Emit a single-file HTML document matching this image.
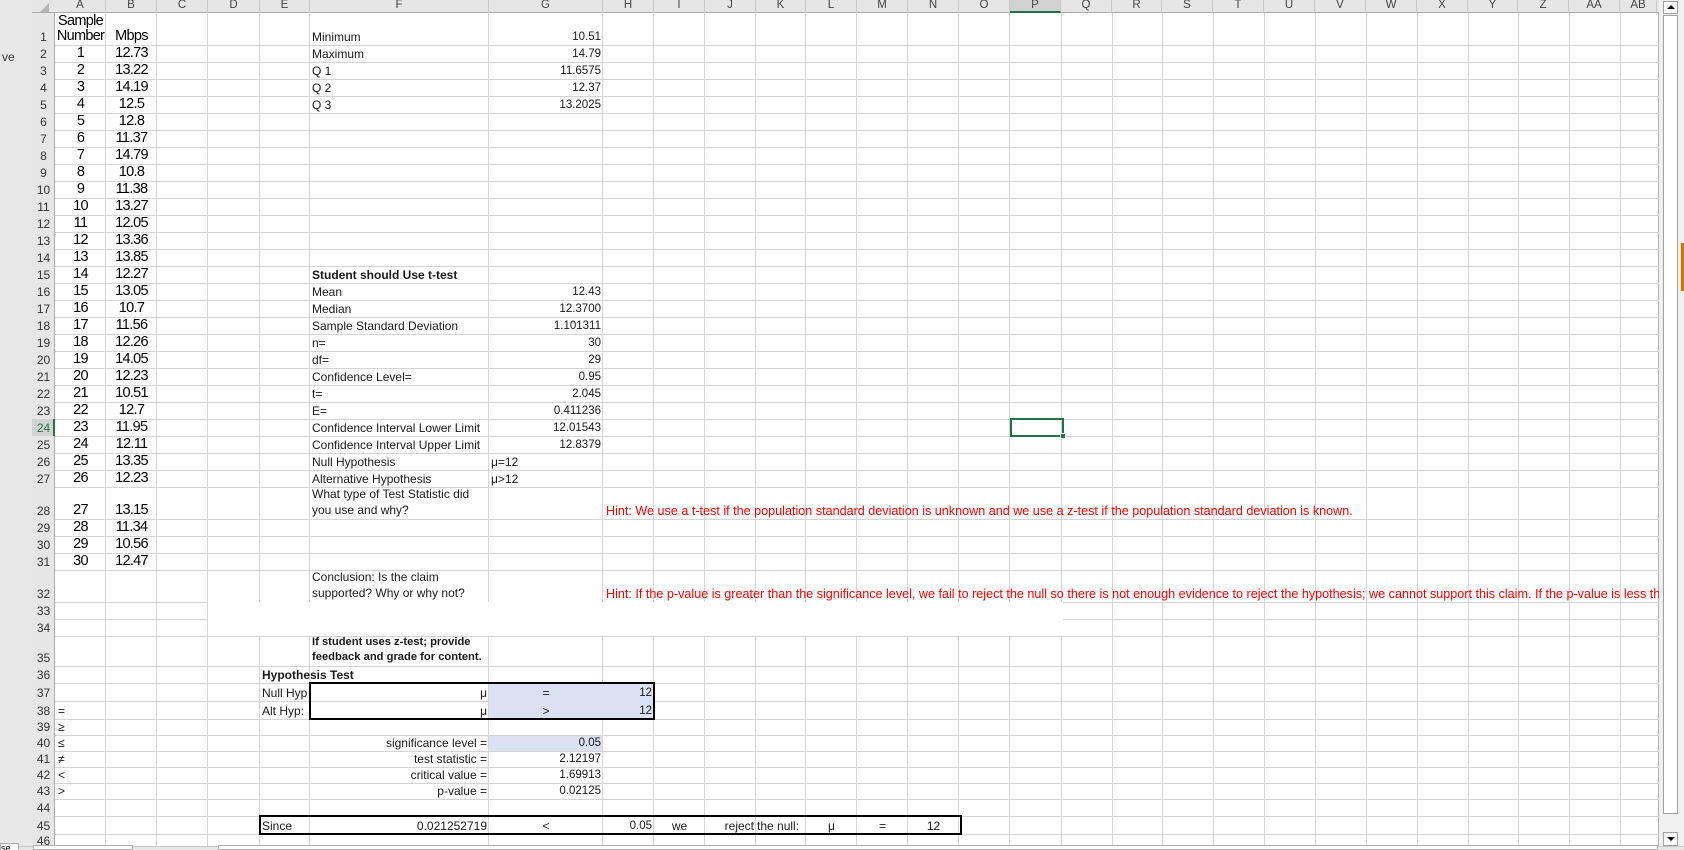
<!DOCTYPE html>
<html><head><meta charset="utf-8"><style>
*{margin:0;padding:0;box-sizing:border-box}
body{width:1684px;height:850px;overflow:hidden;background:#fff;position:relative;font-family:"Liberation Sans",Arial,sans-serif;color:#000}
.lp{position:absolute;left:0;top:0;width:32px;height:850px;background:#e8e8e8}
.ch{position:absolute;left:32px;top:0;width:1627px;height:13px;background:#e6e6e6;border-bottom:1px solid #ababab}
.ch i{position:absolute;top:0;height:13px;font-style:normal;font-size:11.5px;line-height:11px;color:#444;text-align:center;border-right:1px solid #c8c8c8}
.rh{position:absolute;left:32px;top:13px;width:23px;height:833px;background:#e6e6e6;border-right:1px solid #ababab}
.vl{position:absolute;top:13px;width:1px;height:833px;background:#d4d4d4}
.hl{position:absolute;left:55px;width:1604px;height:1px;background:#d4d4d4}
.row{position:absolute;left:0;width:1659px}
.row>i{position:absolute;top:0;height:100%;font-style:normal;display:flex;align-items:flex-end;white-space:nowrap;padding-bottom:1px;font-size:12px;line-height:14px;color:#1a1a1a}
.row>i.n{left:32px;width:23px;justify-content:center;font-size:12px;color:#333}
.row>i.a{left:55px;width:51px;justify-content:center;font-size:14.5px;letter-spacing:-.7px;color:#000;line-height:16px}
.row>i.b{left:106px;width:51px;justify-content:center;font-size:14.5px;letter-spacing:-.7px;color:#000;line-height:16px}
.row>i.f{left:312px;width:177px}
.row>i.fr{left:310px;width:177px;justify-content:flex-end}
.row>i.g{left:489px;width:112px;justify-content:flex-end;font-size:11.5px}
.row>i.gl{left:491px;width:112px}
.row>i.gc{left:489px;width:114px;justify-content:center}
.row>i.h{left:606px;width:60px;color:#f00;font-size:12.6px}
.row>i.hr2{left:603px;width:49px;justify-content:flex-end;font-size:11.5px}
.row>i.e{left:262px;width:60px}
.row>i.al{left:58px;width:40px}
.bold{font-weight:bold}
.wrap{white-space:normal!important;line-height:16px!important}
.shade{position:absolute;background:#d9e1f2}
.box{position:absolute;border:2px solid #000}
</style></head><body>
<div class="lp"></div>
<div style="position:absolute;left:2px;top:50px;font-size:12px;color:#333">ve</div>
<div class="ch">
<div style="position:absolute;left:8px;top:3px;width:0;height:0;border-left:9px solid transparent;border-bottom:9px solid #b5b5b5"></div>
<i style="left:23px;width:51px">A</i><i style="left:74px;width:51px">B</i><i style="left:125px;width:51px">C</i><i style="left:176px;width:52px">D</i><i style="left:228px;width:50px">E</i><i style="left:278px;width:179px">F</i><i style="left:457px;width:114px">G</i>
<i style="left:571px;width:51px">H</i><i style="left:622px;width:51px">I</i><i style="left:673px;width:51px">J</i><i style="left:724px;width:50px">K</i><i style="left:774px;width:51px">L</i><i style="left:825px;width:51px">M</i><i style="left:876px;width:51px">N</i><i style="left:927px;width:51px">O</i><i style="left:978px;width:51px;background:#d2d2d2;border-bottom:2px solid #217346">P</i><i style="left:1029px;width:51px">Q</i><i style="left:1080px;width:50px">R</i><i style="left:1130px;width:51px">S</i><i style="left:1181px;width:51px">T</i><i style="left:1232px;width:51px">U</i><i style="left:1283px;width:51px">V</i><i style="left:1334px;width:51px">W</i><i style="left:1385px;width:51px">X</i><i style="left:1436px;width:50px">Y</i><i style="left:1486px;width:51px">Z</i><i style="left:1537px;width:51px">AA</i><i style="left:1588px;width:37px">AB</i>
</div>
<div class="rh"></div>
<div style="position:absolute;left:32px;top:419px;width:23px;height:17px;background:#d2d2d2;border-right:2px solid #217346"></div>
<div class="vl" style="left:105px"></div><div class="vl" style="left:156px"></div><div class="vl" style="left:207px"></div><div class="vl" style="left:259px"></div><div class="vl" style="left:309px"></div><div class="vl" style="left:488px"></div><div class="vl" style="left:602px"></div>
<div class="vl" style="left:653px"></div><div class="vl" style="left:704px"></div><div class="vl" style="left:755px"></div><div class="vl" style="left:805px"></div><div class="vl" style="left:856px"></div><div class="vl" style="left:907px"></div><div class="vl" style="left:958px"></div><div class="vl" style="left:1009px"></div><div class="vl" style="left:1061px"></div><div class="vl" style="left:1112px"></div><div class="vl" style="left:1162px"></div><div class="vl" style="left:1213px"></div><div class="vl" style="left:1264px"></div><div class="vl" style="left:1315px"></div><div class="vl" style="left:1366px"></div><div class="vl" style="left:1417px"></div><div class="vl" style="left:1468px"></div><div class="vl" style="left:1518px"></div><div class="vl" style="left:1569px"></div><div class="vl" style="left:1620px"></div>
<div class="vl" style="left:1658px;background:#b0b0b0"></div>
<div class="hl" style="top:45px"></div><div class="hl" style="top:62px"></div><div class="hl" style="top:79px"></div><div class="hl" style="top:96px"></div><div class="hl" style="top:113px"></div><div class="hl" style="top:130px"></div><div class="hl" style="top:147px"></div><div class="hl" style="top:164px"></div><div class="hl" style="top:181px"></div><div class="hl" style="top:198px"></div><div class="hl" style="top:215px"></div><div class="hl" style="top:232px"></div><div class="hl" style="top:249px"></div><div class="hl" style="top:266px"></div><div class="hl" style="top:283px"></div><div class="hl" style="top:300px"></div><div class="hl" style="top:317px"></div><div class="hl" style="top:334px"></div><div class="hl" style="top:351px"></div><div class="hl" style="top:368px"></div><div class="hl" style="top:385px"></div><div class="hl" style="top:402px"></div><div class="hl" style="top:419px"></div><div class="hl" style="top:436px"></div><div class="hl" style="top:453px"></div><div class="hl" style="top:470px"></div><div class="hl" style="top:487px"></div><div class="hl" style="top:519px"></div><div class="hl" style="top:536px"></div><div class="hl" style="top:553px"></div><div class="hl" style="top:570px"></div><div class="hl" style="top:602px"></div><div class="hl" style="top:619px"></div><div class="hl" style="top:636px"></div><div class="hl" style="top:666px"></div><div class="hl" style="top:683px"></div><div class="hl" style="top:701px"></div><div class="hl" style="top:719px"></div><div class="hl" style="top:735px"></div><div class="hl" style="top:751px"></div><div class="hl" style="top:767px"></div><div class="hl" style="top:783px"></div><div class="hl" style="top:799px"></div><div class="hl" style="top:816px"></div><div class="hl" style="top:834px"></div>
<div style="position:absolute;left:208px;top:602px;width:855px;height:34px;background:#fff"></div>
<div class="shade" style="left:489px;top:684px;width:165px;height:35px"></div>
<div class="shade" style="left:489px;top:736px;width:113px;height:15px"></div>
<div style="position:absolute;left:1010px;top:418px;width:54px;height:19px;border:2px solid #217346"></div>
<div style="position:absolute;left:1060px;top:433px;width:6px;height:6px;background:#217346;border:1px solid #fff"></div>

<div class="row" style="top:13px;height:32px"><i class="n">1</i><i class="a wrap" style="text-align:center;line-height:15px!important">Sample Number</i><i class="b">Mbps</i><i class="f">Minimum</i><i class="g">10.51</i></div>
<div class="row" style="top:45px;height:17px"><i class="n">2</i><i class="a">1</i><i class="b">12.73</i><i class="f">Maximum</i><i class="g">14.79</i></div>
<div class="row" style="top:62px;height:17px"><i class="n">3</i><i class="a">2</i><i class="b">13.22</i><i class="f">Q 1</i><i class="g">11.6575</i></div>
<div class="row" style="top:79px;height:17px"><i class="n">4</i><i class="a">3</i><i class="b">14.19</i><i class="f">Q 2</i><i class="g">12.37</i></div>
<div class="row" style="top:96px;height:17px"><i class="n">5</i><i class="a">4</i><i class="b">12.5</i><i class="f">Q 3</i><i class="g">13.2025</i></div>
<div class="row" style="top:113px;height:17px"><i class="n">6</i><i class="a">5</i><i class="b">12.8</i></div>
<div class="row" style="top:130px;height:17px"><i class="n">7</i><i class="a">6</i><i class="b">11.37</i></div>
<div class="row" style="top:147px;height:17px"><i class="n">8</i><i class="a">7</i><i class="b">14.79</i></div>
<div class="row" style="top:164px;height:17px"><i class="n">9</i><i class="a">8</i><i class="b">10.8</i></div>
<div class="row" style="top:181px;height:17px"><i class="n">10</i><i class="a">9</i><i class="b">11.38</i></div>
<div class="row" style="top:198px;height:17px"><i class="n">11</i><i class="a">10</i><i class="b">13.27</i></div>
<div class="row" style="top:215px;height:17px"><i class="n">12</i><i class="a">11</i><i class="b">12.05</i></div>
<div class="row" style="top:232px;height:17px"><i class="n">13</i><i class="a">12</i><i class="b">13.36</i></div>
<div class="row" style="top:249px;height:17px"><i class="n">14</i><i class="a">13</i><i class="b">13.85</i></div>
<div class="row" style="top:266px;height:17px"><i class="n">15</i><i class="a">14</i><i class="b">12.27</i><i class="f bold">Student should Use t-test</i></div>
<div class="row" style="top:283px;height:17px"><i class="n">16</i><i class="a">15</i><i class="b">13.05</i><i class="f">Mean</i><i class="g">12.43</i></div>
<div class="row" style="top:300px;height:17px"><i class="n">17</i><i class="a">16</i><i class="b">10.7</i><i class="f">Median</i><i class="g">12.3700</i></div>
<div class="row" style="top:317px;height:17px"><i class="n">18</i><i class="a">17</i><i class="b">11.56</i><i class="f">Sample Standard Deviation</i><i class="g">1.101311</i></div>
<div class="row" style="top:334px;height:17px"><i class="n">19</i><i class="a">18</i><i class="b">12.26</i><i class="f">n=</i><i class="g">30</i></div>
<div class="row" style="top:351px;height:17px"><i class="n">20</i><i class="a">19</i><i class="b">14.05</i><i class="f">df=</i><i class="g">29</i></div>
<div class="row" style="top:368px;height:17px"><i class="n">21</i><i class="a">20</i><i class="b">12.23</i><i class="f">Confidence Level=</i><i class="g">0.95</i></div>
<div class="row" style="top:385px;height:17px"><i class="n">22</i><i class="a">21</i><i class="b">10.51</i><i class="f">t=</i><i class="g">2.045</i></div>
<div class="row" style="top:402px;height:17px"><i class="n">23</i><i class="a">22</i><i class="b">12.7</i><i class="f">E=</i><i class="g">0.411236</i></div>
<div class="row" style="top:419px;height:17px"><i class="n" style="color:#217346">24</i><i class="a">23</i><i class="b">11.95</i><i class="f">Confidence Interval Lower Limit</i><i class="g">12.01543</i></div>
<div class="row" style="top:436px;height:17px"><i class="n">25</i><i class="a">24</i><i class="b">12.11</i><i class="f">Confidence Interval Upper Limit</i><i class="g">12.8379</i></div>
<div class="row" style="top:453px;height:17px"><i class="n">26</i><i class="a">25</i><i class="b">13.35</i><i class="f">Null Hypothesis</i><i class="gl">μ=12</i></div>
<div class="row" style="top:470px;height:17px"><i class="n">27</i><i class="a">26</i><i class="b">12.23</i><i class="f">Alternative Hypothesis</i><i class="gl">μ&gt;12</i></div>
<div class="row" style="top:487px;height:32px"><i class="n">28</i><i class="a">27</i><i class="b">13.15</i><i class="f wrap">What type of Test Statistic did you use and why?</i><i class="h">Hint: We use a t-test if the population standard deviation is unknown and we use a z-test if the population standard deviation is known.</i></div>
<div class="row" style="top:519px;height:17px"><i class="n">29</i><i class="a">28</i><i class="b">11.34</i></div>
<div class="row" style="top:536px;height:17px"><i class="n">30</i><i class="a">29</i><i class="b">10.56</i></div>
<div class="row" style="top:553px;height:17px"><i class="n">31</i><i class="a">30</i><i class="b">12.47</i></div>
<div class="row" style="top:570px;height:32px;overflow:hidden"><i class="n">32</i><i class="f wrap">Conclusion: Is the claim supported? Why or why not?</i><i class="h">Hint: If the p-value is greater than the significance level, we fail to reject the null so there is not enough evidence to reject the hypothesis; we cannot support this claim. If the p-value is less than</i></div>
<div class="row" style="top:602px;height:17px"><i class="n">33</i></div>
<div class="row" style="top:619px;height:17px"><i class="n">34</i></div>
<div class="row" style="top:636px;height:30px"><i class="n">35</i><i class="f wrap bold" style="font-size:11.2px;width:180px;line-height:15px!important">If student uses z-test; provide feedback and grade for content.</i></div>
<div class="row" style="top:666px;height:17px"><i class="n">36</i><i class="e bold" style="width:120px">Hypothesis Test</i></div>
<div class="row" style="top:683px;height:18px"><i class="n">37</i><i class="e">Null Hyp</i><i class="fr">μ</i><i class="gc">=</i><i class="hr2">12</i></div>
<div class="row" style="top:701px;height:18px"><i class="n">38</i><i class="al">=</i><i class="e">Alt Hyp:</i><i class="fr">μ</i><i class="gc">&gt;</i><i class="hr2">12</i></div>
<div class="row" style="top:719px;height:16px"><i class="n">39</i><i class="al">≥</i></div>
<div class="row" style="top:735px;height:16px"><i class="n">40</i><i class="al">≤</i><i class="fr">significance level =</i><i class="g">0.05</i></div>
<div class="row" style="top:751px;height:16px"><i class="n">41</i><i class="al">≠</i><i class="fr">test statistic =</i><i class="g">2.12197</i></div>
<div class="row" style="top:767px;height:16px"><i class="n">42</i><i class="al">&lt;</i><i class="fr">critical value =</i><i class="g">1.69913</i></div>
<div class="row" style="top:783px;height:16px"><i class="n">43</i><i class="al">&gt;</i><i class="fr">p-value =</i><i class="g">0.02125</i></div>
<div class="row" style="top:799px;height:17px"><i class="n">44</i></div>
<div class="row" style="top:816px;height:18px"><i class="n">45</i><i class="e">Since</i><i class="fr">0.021252719</i><i class="gc">&lt;</i><i class="hr2">0.05</i><i style="left:654px;width:51px;justify-content:center">we</i><i style="left:705px;width:49px;justify-content:flex-end">reject</i><i style="left:757px;width:50px">the null:</i><i style="left:806px;width:51px;justify-content:center">μ</i><i style="left:857px;width:51px;justify-content:center">=</i><i style="left:908px;width:51px;justify-content:center">12</i></div>
<div class="row" style="top:834px;height:12px;overflow:hidden"><i class="n" style="align-items:flex-start">46</i></div>

<div class="box" style="left:309px;top:682px;width:346px;height:38px"></div>
<div class="box" style="left:259px;top:815px;width:703px;height:20px"></div>

<div style="position:absolute;left:1659px;top:0;width:25px;height:846px;background:#f0f0f0"></div>
<div style="position:absolute;left:1663px;top:1px;width:15px;height:13px;background:#fff;border:1px solid #a0a0a0"></div>
<div style="position:absolute;left:1667px;top:5px;width:0;height:0;border-left:4px solid transparent;border-right:4px solid transparent;border-bottom:4px solid #000"></div>
<div style="position:absolute;left:1663px;top:15px;width:15px;height:799px;background:#fff;border:1px solid #a0a0a0"></div>
<div style="position:absolute;left:1663px;top:832px;width:15px;height:14px;background:#fff;border:1px solid #a0a0a0"></div>
<div style="position:absolute;left:1667px;top:837px;width:0;height:0;border-left:4px solid transparent;border-right:4px solid transparent;border-top:4px solid #000"></div>
<div style="position:absolute;left:1681px;top:243px;width:3px;height:48px;background:#e07000"></div>
<div style="position:absolute;left:0;top:846px;width:1684px;height:4px;background:#e6e6e6;border-top:1px solid #c8c8c8"></div>
<div style="position:absolute;left:0;top:843px;width:19px;height:7px;background:#fff;border:1px solid #b0b0b0;border-bottom:none;font-size:9px;line-height:9px;overflow:hidden">se</div>
<div style="position:absolute;left:33px;top:845px;width:100px;height:5px;background:#fff;border:1px solid #b0b0b0"></div>
<div style="position:absolute;left:218px;top:845px;width:1440px;height:5px;background:#fff;border:1px solid #b0b0b0"></div>
</body></html>
